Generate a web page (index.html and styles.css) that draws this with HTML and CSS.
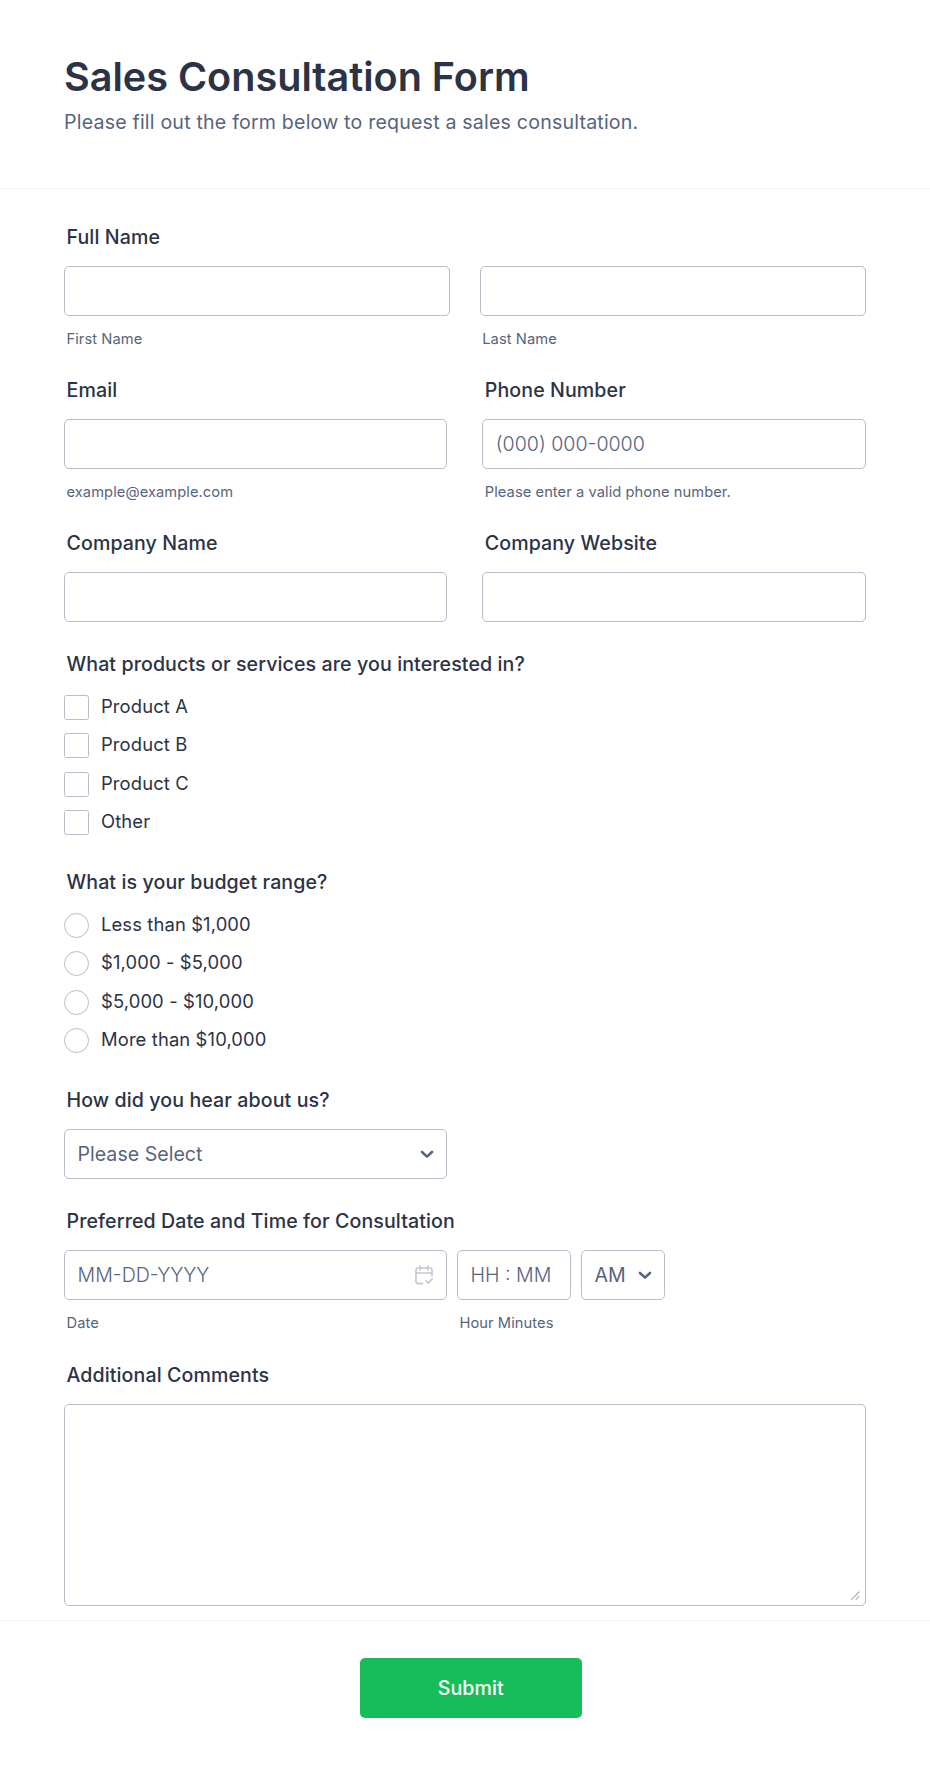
FILE: index.html
```html
<!DOCTYPE html>
<html lang="en">
<head>
	<meta charset="utf-8">
	<title>Sales Consultation Form</title>
	<link rel="stylesheet" href="styles.css">
</head>
<body>
	<form class="form">
		<div class="form-header">
			<h1 class="title">Sales Consultation Form</h1>
			<p class="subtitle">Please fill out the form below to request a sales consultation.</p>
		</div>

		<div class="form-body">
			<div class="field">
				<label class="label" for="first">Full Name</label>
				<div class="name-row">
					<div class="col">
						<input class="input" id="first" type="text">
						<label class="caption" for="first">First Name</label>
					</div>
					<div class="col">
						<input class="input" id="last" type="text">
						<label class="caption" for="last">Last Name</label>
					</div>
				</div>
			</div>

			<div class="field half-row">
				<div class="col">
					<label class="label" for="email">Email</label>
					<input class="input" id="email" type="email">
					<label class="caption" for="email">example@example.com</label>
				</div>
				<div class="col">
					<label class="label" for="phone">Phone Number</label>
					<input class="input" id="phone" type="tel" placeholder="(000) 000-0000">
					<label class="caption" for="phone">Please enter a valid phone number.</label>
				</div>
			</div>

			<div class="field half-row no-caption">
				<div class="col">
					<label class="label" for="company">Company Name</label>
					<input class="input" id="company" type="text">
				</div>
				<div class="col">
					<label class="label" for="website">Company Website</label>
					<input class="input" id="website" type="text">
				</div>
			</div>

			<div class="field choices">
				<span class="label">What products or services are you interested in?</span>
				<label class="option"><input class="box" type="checkbox"><span class="option-text">Product A</span></label>
				<label class="option"><input class="box" type="checkbox"><span class="option-text">Product B</span></label>
				<label class="option"><input class="box" type="checkbox"><span class="option-text">Product C</span></label>
				<label class="option"><input class="box" type="checkbox"><span class="option-text">Other</span></label>
			</div>

			<div class="field choices">
				<span class="label">What is your budget range?</span>
				<label class="option"><input class="box round" type="radio" name="budget"><span class="option-text">Less than $1,000</span></label>
				<label class="option"><input class="box round" type="radio" name="budget"><span class="option-text">$1,000 - $5,000</span></label>
				<label class="option"><input class="box round" type="radio" name="budget"><span class="option-text">$5,000 - $10,000</span></label>
				<label class="option"><input class="box round" type="radio" name="budget"><span class="option-text">More than $10,000</span></label>
			</div>

			<div class="field no-caption">
				<span class="label">How did you hear about us?</span>
				<div class="input select wide">
					<span>Please Select</span>
					<svg class="arrow" viewBox="0 0 14 9"><path d="M2 2l5 4.6L12 2"/></svg>
				</div>
			</div>

			<div class="field">
				<span class="label">Preferred Date and Time for Consultation</span>
				<div class="date-row">
					<div class="wide">
						<div class="input select light">
							<span>MM-DD-YYYY</span>
							<svg class="calendar" viewBox="0 0 18 20">
								<path d="M7.5 18.6H3.2A2.2 2.2 0 0 1 1 16.4V5.2A2.2 2.2 0 0 1 3.2 3h11.6A2.2 2.2 0 0 1 17 5.2v5.6M1 8h16M5.2 1v4M12.8 1v4M11 15.8l2.3 2.3 3.9-4.2"/>
							</svg>
						</div>
						<span class="caption">Date</span>
					</div>
					<div class="time">
						<input class="input" type="text" placeholder="HH : MM">
						<span class="caption">Hour Minutes</span>
					</div>
					<div class="ampm">
						<div class="input select">
							<span>AM</span>
							<svg class="arrow" viewBox="0 0 14 9"><path d="M2 2l5 4.6L12 2"/></svg>
						</div>
					</div>
				</div>
			</div>

			<div class="field comments">
				<label class="label" for="comments">Additional Comments</label>
				<div class="area-wrap">
					<textarea class="input area" id="comments"></textarea>
					<svg class="grip" viewBox="0 0 9 9"><path d="M.7 8.3L8 1M5 8.3L8 5.3"/></svg>
				</div>
			</div>
		</div>

		<div class="form-footer">
			<button class="submit" type="button">Submit</button>
		</div>
	</form>
</body>
</html>
```
FILE: styles.css
```css
* {
	box-sizing: border-box;
}

body {
	margin: 0;
	background: #fff;
	color: #2c3345;
	font-family: Inter, "Liberation Sans", sans-serif;
}

.form-header {
	height: 189px;
	padding: 53px 64px 0;
	border-bottom: 1px solid #f3f3fe;
}

.title {
	margin: 0;
	font-size: 39.6px;
	line-height: 48px;
	font-weight: 600;
}

.subtitle {
	margin: 9px 0 0;
	font-size: 19.6px;
	line-height: 24px;
	letter-spacing: 0.19px;
	color: #57647e;
}

.form-body {
	height: 1432px;
	padding: 36px 64.5px 0 64px;
	border-bottom: 1px solid #f3f3fe;
}

.field {
	margin-bottom: 29.1px;
}

.no-caption {
	margin-bottom: 30.5px;
}

.label {
	display: block;
	height: 24px;
	margin: 0 0 17px 2.5px;
	font-size: 19.6px;
	line-height: 24px;
	font-weight: 500;
	letter-spacing: 0.1px;
}

.input {
	display: block;
	width: 100%;
	height: 49.5px;
	padding: 0 12px 0 12.5px;
	border: 1px solid #b8bdc9;
	border-radius: 5px;
	background: #fff;
	color: #57647e;
	font-family: inherit;
	font-size: 19.6px;
	outline: none;
}

.input::placeholder {
	color: #57647e;
	font-weight: 300;
	opacity: 1;
}

.caption {
	display: block;
	height: 20px;
	margin: 13.6px 0 0 2.5px;
	font-size: 14.7px;
	line-height: 20px;
	letter-spacing: 0.06px;
	color: #57647e;
	white-space: nowrap;
}

.name-row,
.half-row {
	display: flex;
	gap: 30px;
}

.half-row {
	gap: 35px;
}

.col {
	flex: 1;
}

.choices {
	margin-bottom: 35.4px;
}

.choices .label {
	margin-bottom: 18.7px;
}

.option {
	display: flex;
	gap: 12px;
	height: 25px;
	margin-bottom: 13.3px;
	font-size: 18.4px;
	letter-spacing: 0.12px;
}

.option:last-child {
	margin-bottom: 0;
}

.option-text {
	line-height: 23px;
}

.box {
	appearance: none;
	width: 25px;
	height: 25px;
	margin: 0;
	border: 1px solid #b8bdc9;
	border-radius: 2.5px;
	background: #fff;
}

.round {
	border-radius: 50%;
}

.select {
	display: flex;
	align-items: center;
	justify-content: space-between;
}

.wide {
	width: 383px;
}

.light {
	font-weight: 300;
}

.arrow,
.calendar,
.grip {
	fill: none;
	stroke-linecap: round;
	stroke-linejoin: round;
}

.arrow {
	width: 14px;
	height: 9px;
	stroke: #57647e;
	stroke-width: 2.6;
}

.calendar {
	width: 18px;
	height: 20px;
	margin-right: 1px;
	stroke: #c3c7d3;
	stroke-width: 1.6;
}

.date-row {
	display: flex;
	gap: 10px;
}

.time {
	width: 114px;
}

.ampm {
	width: 84px;
}

.area-wrap {
	position: relative;
}

.comments .label {
	margin-bottom: 17.5px;
}

.area {
	height: 201.5px;
	resize: none;
}

.grip {
	position: absolute;
	right: 6px;
	bottom: 6px;
	width: 9px;
	height: 9px;
	stroke: #a9afbe;
	stroke-width: 1.2;
}

.form-footer {
	height: 146px;
	padding: 37px 0 0 359.5px;
}

.submit {
	display: block;
	width: 222.5px;
	height: 60px;
	border: 0;
	border-radius: 5px;
	background: #18bd5b;
	color: #fff;
	font-family: inherit;
	font-size: 19.6px;
	font-weight: 500;
	letter-spacing: 0.1px;
}
```
